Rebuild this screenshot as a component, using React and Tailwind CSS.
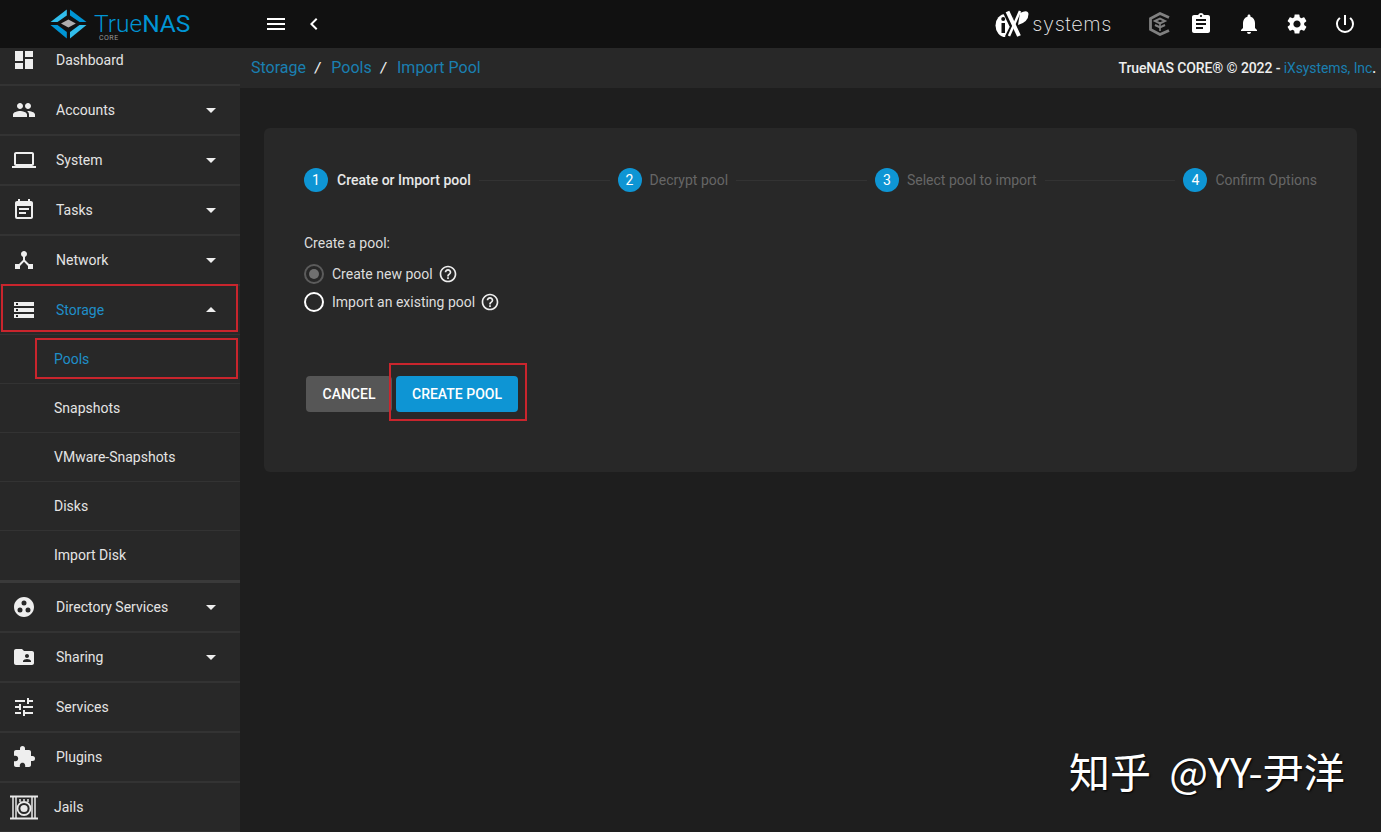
import { Fragment } from "react"
import {
  MdDashboard,
  MdPeople,
  MdLaptop,
  MdEventNote,
  MdDeviceHub,
  MdStorage,
  MdGroupWork,
  MdFolderShared,
  MdTune,
  MdExtension,
  MdArrowDropDown,
  MdArrowDropUp,
  MdMenu,
  MdChevronLeft,
  MdAssignment,
  MdNotifications,
  MdSettings,
  MdPowerSettingsNew,
  MdHelpOutline,
} from "react-icons/md"

const TrueNasMark = () => (
  <svg width="37" height="30" viewBox="0 0 37 30">
    <polygon points="16.8,0.5 16.8,6.5 7.5,13 0.5,13" fill="#31beec" />
    <polygon points="20,0.5 36.5,13 29.5,13 20,6.5" fill="#0095d5" />
    <polygon points="0.5,16 7.5,16 16.8,23 16.8,29.5" fill="#0095d5" />
    <polygon points="36.5,16 29.5,16 20,23 20,29.5" fill="#31beec" />
    <polygon points="11,14.5 18.4,10.5 25.8,14.5 18.4,18.5" fill="#aeadae" />
  </svg>
)

const IxMark = () => (
  <svg width="34" height="28" viewBox="0 0 34 28">
    <ellipse cx="10.5" cy="15.5" rx="10" ry="11.5" fill="#fff" />
    <path d="M11 1 L24 28 M27 0 L13 28" stroke="#111" strokeWidth="7" />
    <path d="M12.5 1.5 L24 26" stroke="#fff" strokeWidth="4" />
    <path d="M25 1 L14 26" stroke="#fff" strokeWidth="2.5" />
    <path d="M25 3 Q33 -1 33.5 4 Q33.5 12 23 15 Z" fill="#fff" />
    <rect x="6.5" y="13" width="3.5" height="10" fill="#111" />
    <circle cx="8.2" cy="9" r="2" fill="#111" />
  </svg>
)

const CubeMark = () => (
  <svg width="22" height="24" viewBox="0 0 22 24" fill="none" stroke="#808080" strokeWidth="2.8">
    <path d="M20 5.5 L11 1.5 L1.5 6.5 V17.5 L11 22.5 L20 18.5" />
    <path d="M6 9 L11 6.5 L16 9 L11 11.5 Z" strokeWidth="2" />
    <path d="M6 13 L11 15.5 L16 13" strokeWidth="2" />
    <path d="M11 11.5 V19" strokeWidth="1.6" />
  </svg>
)

const JailIcon = () => (
  <svg width="28" height="25" viewBox="0 0 28 25" fill="none" stroke="#e8e8e8">
    <path d="M0 1.5 H28 M0 23.5 H28" strokeWidth="2" />
    <path d="M3 2 V23 M6 2 V23 M22 2 V23 M25 2 V23" strokeWidth="1.5" />
    <path d="M10 4 V7 M14 4 V6 M18 4 V7" strokeWidth="1.5" />
    <circle cx="14" cy="13.5" r="6.5" strokeWidth="1.8" />
    <circle cx="14" cy="13.5" r="3.6" fill="#e8e8e8" stroke="none" />
  </svg>
)

const menuTop = [
  { label: "Dashboard", icon: MdDashboard },
  { label: "Accounts", icon: MdPeople, caret: true },
  { label: "System", icon: MdLaptop, caret: true },
  { label: "Tasks", icon: MdEventNote, caret: true },
  { label: "Network", icon: MdDeviceHub, caret: true },
]

const menuBottom = [
  { label: "Directory Services", icon: MdGroupWork, caret: true },
  { label: "Sharing", icon: MdFolderShared, caret: true },
  { label: "Services", icon: MdTune },
  { label: "Plugins", icon: MdExtension },
]

const storageItems = ["Pools", "Snapshots", "VMware-Snapshots", "Disks", "Import Disk"]

const steps = ["Create or Import pool", "Decrypt pool", "Select pool to import", "Confirm Options"]

const NavRow = ({ item }) => {
  const Icon = item.icon
  return (
    <div className="flex h-[50px] items-center border-b-2 border-[#333333] text-sm text-[#e4e4e4]">
      <Icon size={24} className="ml-3 text-[#eeeeee]" />
      <span className="ml-5">{item.label}</span>
      {item.caret && <MdArrowDropDown size={24} className="ml-auto mr-[17px] text-[#eeeeee]" />}
    </div>
  )
}

const Step = ({ n, label, active }) => (
  <div className="flex items-center gap-2">
    <span className="flex h-6 w-6 items-center justify-center rounded-full bg-[#0e95d4] text-sm text-white">
      {n}
    </span>
    <span className={active ? "ml-px text-sm font-medium text-[#e8e8e8]" : "text-sm text-[#666666]"}>
      {label}
    </span>
  </div>
)

const App = () => {
  return (
    <div className="relative flex h-screen flex-col overflow-hidden bg-[#1e1e1e] font-['Roboto',sans-serif]">
      {/* Top bar */}
      <header className="z-10 flex h-12 shrink-0 items-center bg-[#111111] text-white">
        <div className="flex w-[240px] items-center pl-[50px]">
          <TrueNasMark />
          <div className="relative ml-[7px] text-[24.5px] leading-none text-[#0095d5]">
            <span className="font-light">True</span>
            <span className="font-normal">NAS</span>
            <span className="absolute left-[5px] top-[23px] text-[7px] leading-none tracking-[0.5px] text-[#999999]">CORE</span>
          </div>
        </div>
        <MdMenu size={24} className="ml-6" />
        <MdChevronLeft size={24} className="ml-[14px]" />
        <div className="ml-auto flex items-center">
          <IxMark />
          <span className="ml-[3px] font-['Inter',sans-serif] text-[20px] font-extralight leading-none tracking-[0.6px] text-[#eeeeee]">
            systems
          </span>
          <span className="ml-[37px]"><CubeMark /></span>
          <MdAssignment size={24} className="ml-[18px]" />
          <MdNotifications size={24} className="ml-6" />
          <MdSettings size={24} className="ml-6" />
          <MdPowerSettingsNew size={24} className="ml-6 mr-6" />
        </div>
      </header>

      <div className="flex min-h-0 flex-1">
        {/* Sidebar */}
        <aside className="w-[240px] shrink-0 overflow-hidden bg-[#282828]">
          <div className="-mt-3">
            {menuTop.map((item) => (
              <NavRow key={item.label} item={item} />
            ))}
            <div className="flex h-[49px] items-center border-b border-[#333333] text-sm text-[#1f8fc9]">
              <MdStorage size={24} className="ml-3 text-[#eeeeee]" />
              <span className="ml-5">Storage</span>
              <MdArrowDropUp size={24} className="ml-auto mr-[17px] text-[#eeeeee]" />
            </div>
            <div className="border-b-[3px] border-[#3a3a3a]">
              {storageItems.map((label, i) => (
                <div
                  key={label}
                  className={`flex h-[49px] items-center border-b pl-[54px] text-sm ${
                    i === 0 ? "text-[#1f8fc9]" : "text-[#e4e4e4]"
                  } ${i < storageItems.length - 1 ? "border-[#333333]" : "border-transparent"}`}
                >
                  {label}
                </div>
              ))}
            </div>
            {menuBottom.map((item) => (
              <NavRow key={item.label} item={item} />
            ))}
            <div className="flex h-[50px] items-center border-b-2 border-[#333333] text-sm text-[#e4e4e4]">
              <span className="ml-[10px]"><JailIcon /></span>
              <span className="ml-4">Jails</span>
            </div>
          </div>
        </aside>

        {/* Main */}
        <main className="min-w-0 flex-1">
          <div className="flex h-10 items-center bg-[#282828] pl-[11px] pr-[5px]">
            <span className="text-base text-[#1a7fb0]">Storage</span>
            <span className="mx-[9px] text-sm font-medium italic text-[#eeeeee]">/</span>
            <span className="ml-[2px] text-base text-[#1a7fb0]">Pools</span>
            <span className="mx-[9px] text-sm font-medium italic text-[#eeeeee]">/</span>
            <span className="ml-[2px] text-base text-[#1a7fb0]">Import Pool</span>
            <span className="ml-auto text-sm font-medium tracking-[-0.1px] text-[#eeeeee]">
              TrueNAS CORE® © 2022 - <span className="font-normal text-[#1a7fb0]">iXsystems, Inc</span>.
            </span>
          </div>

          <div className="px-6 pt-10">
            <section className="h-[344px] rounded-md bg-[#282828] pl-10 pr-[40px] pt-10">
              <div className="flex items-center">
                {steps.map((label, i) => (
                  <Fragment key={label}>
                    {i > 0 && <div className="mx-2 h-px flex-1 bg-[#333333]" />}
                    <Step n={i + 1} label={label} active={i === 0} />
                  </Fragment>
                ))}
              </div>

              <p className="mt-[41px] text-sm leading-5 text-[#dddddd]">Create a pool:</p>

              <div className="mt-[11px] flex h-5 items-center text-sm text-[#dddddd]">
                <span className="flex h-5 w-5 items-center justify-center rounded-full border-2 border-[#5c5c5c]">
                  <span className="h-[10px] w-[10px] rounded-full bg-[#707070]" />
                </span>
                <span className="ml-2">Create new pool</span>
                <MdHelpOutline size={20} className="ml-[5px] text-[#eeeeee]" />
              </div>
              <div className="mt-2 flex h-5 items-center text-sm text-[#dddddd]">
                <span className="h-5 w-5 rounded-full border-2 border-white" />
                <span className="ml-2">Import an existing pool</span>
                <MdHelpOutline size={20} className="ml-[5px] text-[#eeeeee]" />
              </div>

              <div className="ml-[2px] mt-[64px] flex">
                <button className="h-9 w-[86px] rounded bg-[#565656] text-sm font-medium text-white">
                  CANCEL
                </button>
                <button className="ml-1 h-9 w-[122px] rounded bg-[#0e95d4] text-sm font-medium text-white">
                  CREATE POOL
                </button>
              </div>
            </section>
          </div>
        </main>
      </div>

      {/* Annotation boxes drawn over the screenshot */}
      <div className="absolute left-[1px] top-[284px] h-[48px] w-[237px] border-2 border-[#c9252d]" />
      <div className="absolute left-[35px] top-[338px] h-[41px] w-[203px] border-2 border-[#c9252d]" />
      <div className="absolute left-[389px] top-[363px] h-[58px] w-[138px] border-2 border-[#c9252d]" />

      {/* Watermark */}
      <div className="absolute left-[1069px] top-[742px] font-['Noto_Sans_CJK_SC',sans-serif] text-[41px] leading-[56px] text-white [word-spacing:9px] [text-shadow:1px_1px_2px_#000]">
        知乎 @YY-尹洋
      </div>
    </div>
  )
}

export default App
